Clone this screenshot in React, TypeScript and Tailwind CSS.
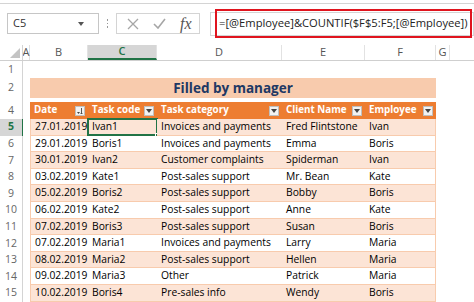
import React from 'react';

const rows: string[][] = [
    ['27.01.2019', 'Ivan1', 'Invoices and payments', 'Fred Flintstone', 'Ivan'],
    ['29.01.2019', 'Boris1', 'Invoices and payments', 'Emma', 'Boris'],
    ['30.01.2019', 'Ivan2', 'Customer complaints', 'Spiderman', 'Ivan'],
    ['03.02.2019', 'Kate1', 'Post-sales support', 'Mr. Bean', 'Kate'],
    ['05.02.2019', 'Boris2', 'Post-sales support', 'Bobby', 'Boris'],
    ['06.02.2019', 'Kate2', 'Post-sales support', 'Anne', 'Kate'],
    ['07.02.2019', 'Boris3', 'Post-sales support', 'Susan', 'Boris'],
    ['07.02.2019', 'Maria1', 'Invoices and payments', 'Larry', 'Maria'],
    ['08.02.2019', 'Maria2', 'Post-sales support', 'Hellen', 'Maria'],
    ['09.02.2019', 'Maria3', 'Other', 'Patrick', 'Maria'],
    ['10.02.2019', 'Boris4', 'Pre-sales info', 'Wendy', 'Boris'],
];

// table column widths (B..F)
const widths = ['w-[58px]', 'w-[69px]', 'w-[125px]', 'w-[83px]', 'w-[71px]'];
const headers = ['Date', 'Task code', 'Task category', 'Client Name', 'Employee'];

function RowHead({ n, active }: { n?: string; active?: boolean }) {
    return (
        <div
            className={`w-[23px] shrink-0 h-full flex items-center justify-center border-r text-[10.5px] ${
                active
                    ? 'bg-[#d6d6d6] border-[#217346] text-[#217346] font-bold'
                    : 'border-[#d4d4d4] text-[#666]'
            }`}
        >
            {n}
        </div>
    );
}

function FilterButton({ sort }: { sort?: boolean }) {
    return (
        <div className="w-[10px] h-[10px] shrink-0 bg-[#f2f2f2] border border-[#bfbfbf] flex items-center justify-center">
            {sort ? (
                <svg width="8" height="8" viewBox="0 0 8 8">
                    <path d="M1 5h3L2.5 7z" fill="#444" />
                    <path d="M5.5 1v6M4.5 6l1 1 1-1" stroke="#444" strokeWidth="0.9" fill="none" />
                </svg>
            ) : (
                <svg width="6" height="4" viewBox="0 0 6 4">
                    <path d="M0 0h6L3 4z" fill="#444" />
                </svg>
            )}
        </div>
    );
}

export default function App() {
    return (
        <div
            className="w-[474px] h-[302px] overflow-hidden bg-white text-[#000] relative"
            style={{ fontFamily: '"Open Sans", "Liberation Sans", sans-serif' }}
        >
            {/* formula toolbar */}
            <div className="h-[42px] border-t border-[#d4d4d4] mt-[3px] flex items-start pt-[8px]">
                <div className="ml-[7px] mt-[1px] w-[92px] h-[21px] border border-[#c6c6c6] flex items-center pl-[5px] pr-[14px] justify-between text-[11px] text-[#333]">
                    <span>C5</span>
                    <svg width="6" height="4" viewBox="0 0 6 4">
                        <path d="M0 0h6L3 4z" fill="#555" />
                    </svg>
                </div>
                <div className="w-[17px] h-[23px] flex flex-col items-center justify-center gap-[2px]">
                    <span className="w-[1.5px] h-[1.5px] bg-[#999]" />
                    <span className="w-[1.5px] h-[1.5px] bg-[#999]" />
                    <span className="w-[1.5px] h-[1.5px] bg-[#999]" />
                </div>
                <div className="mt-[1px] w-[84px] h-[21px] border border-[#d4d4d4] flex items-center pl-[10px] gap-[14px]">
                    <svg width="12" height="12" viewBox="0 0 12 12">
                        <path d="M1 1l10 10M11 1L1 11" stroke="#a6a6a6" strokeWidth="1.3" />
                    </svg>
                    <svg width="13" height="11" viewBox="0 0 13 11">
                        <path d="M1 6l4 4 7-9" stroke="#a6a6a6" strokeWidth="1.6" fill="none" />
                    </svg>
                    <span
                        className="italic text-[16px] leading-none text-[#555]"
                        style={{ fontFamily: '"Liberation Serif", serif' }}
                    >
                        fx
                    </span>
                </div>
                <div className="ml-[10px] flex-1 h-[24px] border border-[#d4d4d4] relative">
                    <div className="absolute left-[4px] -top-[4px] right-[1px] h-[29px] border-2 border-[#e0141e] flex items-center pl-[2px] text-[11.2px] text-[#222] whitespace-nowrap">
                        =[@Employee]&amp;COUNTIF($F$5:F5;[@Employee])
                    </div>
                </div>
            </div>

            {/* column letters */}
            <div className="h-[16px] flex border-b border-[#cfcfcf] text-[11px] text-[#555]">
                <div className="w-[23px] shrink-0 h-full border-r border-[#d4d4d4] relative">
                    <svg className="absolute right-[2px] bottom-[2px]" width="10" height="10" viewBox="0 0 10 10">
                        <path d="M10 0v10H0z" fill="#c4c4c4" />
                    </svg>
                </div>
                <div className="w-[7px] shrink-0 flex items-center justify-center border-r border-[#e2e2e2]">A</div>
                {['B', 'C', 'D', 'E', 'F'].map((l, i) => (
                    <div
                        key={l}
                        className={`${widths[i]} shrink-0 flex items-center justify-center border-r border-[#e2e2e2] ${
                            l === 'C' ? 'bg-[#d6d6d6] border-b-2 border-b-[#217346] text-[#217346] font-semibold' : ''
                        }`}
                    >
                        {l}
                    </div>
                ))}
                <div className="w-[14px] shrink-0 flex items-center justify-center border-r border-[#e2e2e2]">G</div>
                <div className="flex-1" />
            </div>

            {/* row 1 */}
            <div className="h-[17px] flex">
                <RowHead n="1" />
            </div>

            {/* row 2: title */}
            <div className="h-[20px] flex">
                <RowHead n="2" />
                <div className="w-[7px] shrink-0" />
                <div className="w-[406px] shrink-0 bg-[#f8cbad] flex items-center justify-center text-[13.5px] font-bold text-[#203864]">
                    Filled by manager
                </div>
            </div>

            {/* row 3 hidden */}
            <div className="h-[4px] flex">
                <RowHead />
            </div>

            {/* row 4: headers */}
            <div className="h-[17px] flex">
                <RowHead n="4" />
                <div className="w-[7px] shrink-0" />
                {headers.map((h, i) => (
                    <div
                        key={h}
                        className={`${widths[i]} shrink-0 bg-[#ed7d31] flex items-center justify-between pl-[4px] pr-[3px] text-[9.8px] font-bold text-white whitespace-nowrap`}
                    >
                        <span>{h}</span>
                        <FilterButton sort={i === 0} />
                    </div>
                ))}
            </div>

            {/* data rows */}
            {rows.map((r, ri) => (
                <div key={ri} className="h-[16.6px] flex">
                    <RowHead n={String(ri + 5)} active={ri === 0} />
                    <div className="w-[7px] shrink-0" />
                    {r.map((v, ci) => (
                        <div
                            key={ci}
                            className={`${widths[ci]} shrink-0 relative flex items-center pl-[4px] whitespace-nowrap text-[10.3px] border-b border-[#f8cbad] ${
                                ri % 2 === 0 ? 'bg-[#fce4d6]' : 'bg-white'
                            } ${ci === 0 ? 'border-l' : ''} ${ci === 4 ? 'border-r' : ''}`}
                        >
                            {v}
                            {ri === 0 && ci === 1 && (
                                <div className="absolute -left-[1px] -top-[1px] -right-[1px] -bottom-[1px] border-2 border-[#217346]">
                                    <div className="absolute -right-[4px] -bottom-[4px] w-[5px] h-[5px] bg-[#217346] border border-white" />
                                </div>
                            )}
                        </div>
                    ))}
                </div>
            ))}
        </div>
    );
}
